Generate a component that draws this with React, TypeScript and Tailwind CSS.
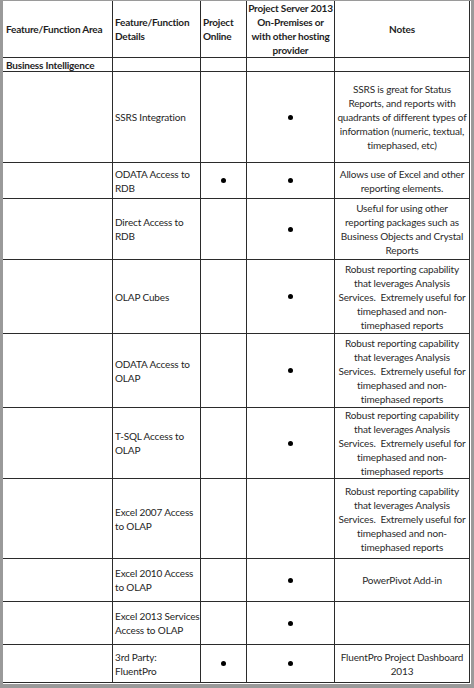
import React from "react";

interface Row {
  detail: string[];
  online: boolean;
  server: boolean;
  notes: string[];
  h: string;
}

const robust = [
  "Robust reporting capability",
  "that leverages Analysis",
  "Services.  Extremely useful for",
  "timephased and non-",
  "timephased reports",
];

const rows: Row[] = [
  {
    detail: ["SSRS Integration"],
    online: false,
    server: true,
    notes: [
      "SSRS is great for Status",
      "Reports, and reports with",
      "quadrants of different types of",
      "information (numeric, textual,",
      "timephased, etc)",
    ],
    h: "h-[91px]",
  },
  {
    detail: ["ODATA Access to", "RDB"],
    online: true,
    server: true,
    notes: ["Allows use of Excel and other", "reporting elements."],
    h: "h-[36px]",
  },
  {
    detail: ["Direct Access to", "RDB"],
    online: false,
    server: true,
    notes: [
      "Useful for using other",
      "reporting packages such as",
      "Business Objects and Crystal",
      "Reports",
    ],
    h: "h-[61px]",
  },
  { detail: ["OLAP Cubes"], online: false, server: true, notes: robust, h: "h-[74px]" },
  { detail: ["ODATA Access to", "OLAP"], online: false, server: true, notes: robust, h: "h-[74px]" },
  { detail: ["T-SQL Access to", "OLAP"], online: false, server: true, notes: robust, h: "h-[71px]" },
  { detail: ["Excel 2007 Access", "to OLAP"], online: false, server: false, notes: robust, h: "h-[80px]" },
  {
    detail: ["Excel 2010 Access", "to OLAP"],
    online: false,
    server: true,
    notes: ["PowerPivot Add-in"],
    h: "h-[43px]",
  },
  {
    detail: ["Excel 2013 Services", "Access to OLAP"],
    online: false,
    server: true,
    notes: [],
    h: "h-[43px]",
  },
  {
    detail: ["3rd Party:", "FluentPro"],
    online: true,
    server: true,
    notes: ["FluentPro Project Dashboard", "2013"],
    h: "h-[38px]",
  },
];

const cell = "border-r border-b border-[#2b2b2b] flex items-center overflow-hidden";

const Dot = () => <span className="block w-[5px] h-[5px] rounded-full bg-black" />;

const Lines = ({ lines }: { lines: string[] }) => (
  <div>
    {lines.map((l, i) => (
      <div key={i} className="whitespace-pre">
        {l}
      </div>
    ))}
  </div>
);

export default function App() {
  return (
    <div className="w-[474px] h-[688px] bg-[#9a9a9a] pl-[3px] pt-[1px] pr-[3px] pb-[4px]">
      <div
        className="w-[468px] h-[683px] bg-white text-[#1e1e1e] text-[10px] leading-[14px] tracking-[-0.15px]"
        style={{ fontFamily: "Lato, 'Liberation Sans', sans-serif" }}
      >
        <div className="grid grid-cols-[110px_88px_46px_88px_135px]">
          {/* header */}
          <div className={`${cell} h-[57px] pl-[3px] font-bold tracking-[-0.2px]`}>
            Feature/Function Area
          </div>
          <div className={`${cell} h-[57px] pl-[2px] font-bold tracking-[-0.2px]`}>
            <Lines lines={["Feature/Function", "Details"]} />
          </div>
          <div className={`${cell} h-[57px] pl-[2px] font-bold tracking-[-0.2px]`}>
            <Lines lines={["Project", "Online"]} />
          </div>
          <div className={`${cell} h-[57px] justify-center text-center font-bold tracking-[-0.2px]`}>
            <Lines lines={["Project Server 2013", "On-Premises or", "with other hosting", "provider"]} />
          </div>
          <div className={`${cell} h-[57px] justify-center font-bold`}>Notes</div>

          {/* section */}
          <div className={`${cell} h-[14px] pl-[3px] font-bold tracking-[-0.2px]`}>
            Business Intelligence
          </div>
          <div className={`${cell} h-[14px]`} />
          <div className={`${cell} h-[14px]`} />
          <div className={`${cell} h-[14px]`} />
          <div className={`${cell} h-[14px]`} />

          {rows.map((r) => (
            <React.Fragment key={r.detail.join(" ")}>
              <div className={`${cell} ${r.h}`} />
              <div className={`${cell} ${r.h} pl-[2px]`}>
                <Lines lines={r.detail} />
              </div>
              <div className={`${cell} ${r.h} justify-center`}>{r.online && <Dot />}</div>
              <div className={`${cell} ${r.h} justify-center`}>{r.server && <Dot />}</div>
              <div className={`${cell} ${r.h} justify-center text-center text-[#2a2a2a]`}>
                <Lines lines={r.notes} />
              </div>
            </React.Fragment>
          ))}
        </div>
      </div>
    </div>
  );
}
